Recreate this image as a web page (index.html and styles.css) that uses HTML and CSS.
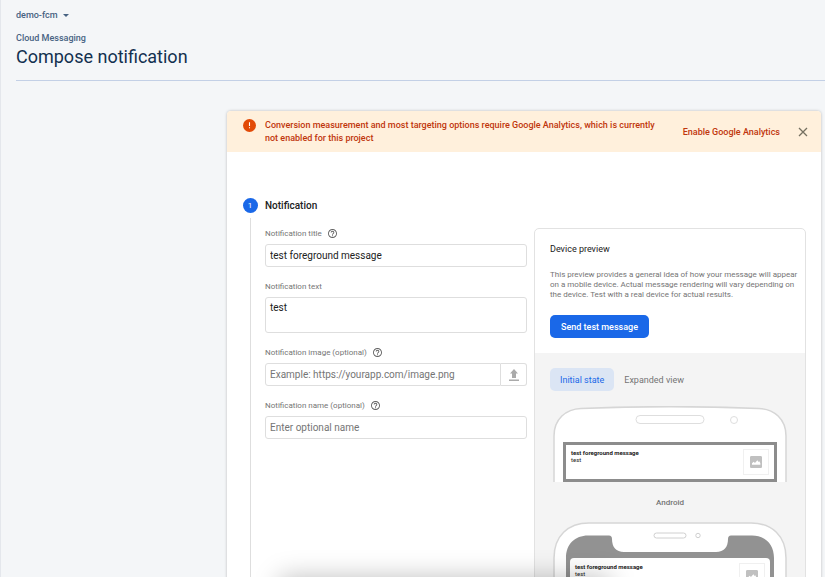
FILE: index.html
```html
<!DOCTYPE html>
<html lang="en">
<head>
    <meta charset="UTF-8">
    <meta name="viewport" content="width=device-width, initial-scale=1.0">
    <title>Compose notification</title>
    <link rel="stylesheet" href="styles.css">
</head>
<body>
    <!-- shared icons -->
    <svg class="sprite" aria-hidden="true">
        <symbol id="icon-help" viewBox="2 2 20 20">
            <path d="M11 18h2v-2h-2v2zm1-16C6.48 2 2 6.48 2 12s4.48 10 10 10 10-4.48 10-10S17.52 2 12 2zm0 18c-4.41 0-8-3.59-8-8s3.59-8 8-8 8 3.59 8 8-3.59 8-8 8zm0-14c-2.21 0-4 1.79-4 4h2c0-1.1.9-2 2-2s2 .9 2 2c0 2-3 1.75-3 5h2c0-2.25 3-2.5 3-5 0-2.21-1.79-4-4-4z"/>
        </symbol>
        <symbol id="icon-image" viewBox="3 3 18 18">
            <path d="M21 19V5c0-1.1-.9-2-2-2H5c-1.1 0-2 .9-2 2v14c0 1.1.9 2 2 2h14c1.1 0 2-.9 2-2zM6 16v-2l2.500-2.500 2 2 3.500-4 2 2.500 1-1 1.500 3V16z" fill-rule="evenodd"/>
        </symbol>
    </svg>

    <header class="page-header">
        <button class="project-picker" type="button">
            demo-fcm
            <svg viewBox="0 0 6 3" width="6" height="3" aria-hidden="true"><path d="M0 0h6L3 3z"/></svg>
        </button>
        <a class="section-link" href="#">Cloud Messaging</a>
        <h1>Compose notification</h1>
    </header>

    <main class="card">
        <div class="banner" role="alert">
            <svg class="banner-icon" viewBox="0 0 24 24" aria-hidden="true">
                <circle cx="12" cy="12" r="12"/>
                <path d="M11 6h2v7h-2zM11 15h2v2h-2z" fill="#fff"/>
            </svg>
            <p>Conversion measurement and most targeting options require Google Analytics, which is currently not enabled for this project</p>
            <a href="#">Enable Google Analytics</a>
            <button class="close" type="button" aria-label="Dismiss">
                <svg viewBox="0 0 10 10" width="10" height="10"><path d="M1 1l8 8M9 1L1 9" fill="none" stroke="#757061" stroke-width="1.300"/></svg>
            </button>
        </div>

        <section class="step">
            <div class="step-rail"><span class="step-number">1</span></div>
            <div class="step-content">
                <h2>Notification</h2>
                <div class="step-columns">
                    <form class="fields">
                        <div class="form-group">
                            <div class="label-row">
                                <label for="title">Notification title</label>
                                <button class="help" type="button" aria-label="Help"><svg><use href="#icon-help"/></svg></button>
                            </div>
                            <input type="text" id="title" value="test foreground message">
                        </div>
                        <div class="form-group">
                            <div class="label-row">
                                <label for="text">Notification text</label>
                            </div>
                            <textarea id="text">test</textarea>
                        </div>
                        <div class="form-group">
                            <div class="label-row">
                                <label for="image">Notification image (optional)</label>
                                <button class="help" type="button" aria-label="Help"><svg><use href="#icon-help"/></svg></button>
                            </div>
                            <div class="upload-row">
                                <input type="text" id="image" placeholder="Example: https://yourapp.com/image.png">
                                <button class="upload" type="button" aria-label="Upload image">
                                    <svg viewBox="0 0 10 12" width="10" height="12"><path d="M5 0l4 4.500H7V9H3V4.500H1zM0 10.500h10V12H0z"/></svg>
                                </button>
                            </div>
                        </div>
                        <div class="form-group">
                            <div class="label-row">
                                <label for="name">Notification name (optional)</label>
                                <button class="help" type="button" aria-label="Help"><svg><use href="#icon-help"/></svg></button>
                            </div>
                            <input type="text" id="name" placeholder="Enter optional name">
                        </div>
                    </form>

                    <aside class="preview">
                        <div class="preview-info">
                            <h3>Device preview</h3>
                            <p>This preview provides a general idea of how your message will appear on a mobile device. Actual message rendering will vary depending on the device. Test with a real device for actual results.</p>
                            <button class="primary" type="button">Send test message</button>
                        </div>
                        <div class="preview-devices">
                            <div class="tabs">
                                <button class="tab active" type="button">Initial state</button>
                                <button class="tab" type="button">Expanded view</button>
                            </div>

                            <div class="phone android">
                                <svg class="phone-frame" viewBox="0 0 234 76" aria-hidden="true">
                                    <path d="M1 77V30C1 13 13 3 28 2.500C88 0 146 0 206 2.500C221 3 233 13 233 30V77" fill="#fff" stroke="#d6d6d6" stroke-width="1.500"/>
                                    <rect x="83" y="9.500" width="68" height="8" rx="4" fill="#fff" stroke="#dedede"/>
                                    <circle cx="181" cy="14" r="3.500" fill="#fff" stroke="#dedede"/>
                                </svg>
                                <div class="message">
                                    <div>
                                        <strong>test foreground message</strong>
                                        <span>test</span>
                                    </div>
                                    <div class="thumb"><svg><use href="#icon-image"/></svg></div>
                                </div>
                            </div>
                            <div class="phone-name">Android</div>

                            <div class="phone ios">
                                <svg class="phone-frame" viewBox="0 0 234 110" aria-hidden="true">
                                    <path d="M1 110V36C1 14 15 1 36 1H198C219 1 233 14 233 36V110" fill="#fff" stroke="#d6d6d6" stroke-width="1.500"/>
                                    <path d="M13 110V36C13 22 22 13.500 35 13.500H56Q59 13.500 59 17C59 25 63 30 71 30H163C171 30 175 25 175 17Q175 13.500 178 13.500H199C212 13.500 221 22 221 36V110z" fill="#929292"/>
                                    <rect x="101" y="11" width="32" height="5" rx="2.500" fill="#fff" stroke="#d0d0d0"/>
                                    <circle cx="145" cy="13.500" r="2.200" fill="#fff" stroke="#d0d0d0"/>
                                </svg>
                                <div class="message">
                                    <div>
                                        <strong>test foreground message</strong>
                                        <span>test</span>
                                    </div>
                                    <div class="thumb"><svg><use href="#icon-image"/></svg></div>
                                </div>
                            </div>
                        </div>
                    </aside>
                </div>
            </div>
        </section>
    </main>

    <!-- floating panel resting under the fold, only its shadow shows -->
    <div class="bottom-sheet"></div>
</body>
</html>
```

FILE: styles.css
```css
* { box-sizing: border-box; }
body { margin: 0; height: 100vh; overflow: hidden; padding-left: 1px; background: #f4f6f8; border-left: 1px solid #e4e7ec; font-family: Roboto, Arial, sans-serif; font-size: 9px; color: #212121; }
h1, h2, h3, p { margin: 0; }
a { text-decoration: none; }
button { border: none; background: none; padding: 0; font-family: inherit; font-size: inherit; cursor: pointer; }
svg { display: block; }
.sprite { position: absolute; width: 0; height: 0; }

/* header */
.page-header { display: flex; flex-direction: column; align-items: flex-start; margin-left: 14px; padding: 8px 0 11px; border-bottom: 1px solid #c3d0e6; color: #476282; }
.project-picker { display: flex; align-items: center; gap: 5px; height: 14px; color: inherit; font-weight: 500; fill: #476282; }
.section-link { margin-top: 9px; line-height: 14px; font-weight: 500; color: inherit; }
h1 { line-height: 24px; font-size: 18px; font-weight: 400; color: #12304f; }

/* card */
.card { margin: 30px 4px 0 225px; min-height: 100vh; background: #fff; border-radius: 4px; box-shadow: 0 0 3px rgba(0, 0, 0, 0.25); }
.banner { display: flex; align-items: center; padding: 8px 13px 7px 16px; background: #fff0dc; border-radius: 4px 4px 0 0; color: #bf360c; font-weight: 500; line-height: 13px; }
.banner p { flex: 1; }
.banner a { margin: 0 18px 0 24px; color: inherit; }
.banner-icon { width: 13px; height: 13px; margin-right: 9px; align-self: flex-start; fill: #e24a07; }

.step { display: flex; gap: 7px; padding: 46px 15px 0 15px; }
.step-rail { display: flex; flex-direction: column; align-items: center; gap: 5px; width: 16px; }
.step-rail::after { content: ""; flex: 1; width: 1px; background: #dedede; }
.step-number { width: 15px; height: 15px; border-radius: 50%; background: #1a68e8; color: #fff; font-size: 8px; line-height: 15px; text-align: center; }
.step-content { flex: 1; }
h2 { font-size: 10px; font-weight: 500; line-height: 16px; }
.step-columns { display: grid; grid-template-columns: 262px 1fr; gap: 7px; align-items: start; padding-top: 14px; }

/* form */
.fields { display: flex; flex-direction: column; gap: 14px; }
.label-row { display: flex; align-items: center; gap: 6px; height: 10px; margin-bottom: 6px; font-size: 8px; color: #757575; }
.help svg { width: 9px; height: 9px; fill: #616161; }
input, textarea { display: block; width: 100%; height: 23px; padding: 0 4px; border: 1px solid #dedede; border-radius: 3px; background: #fff; font-family: inherit; font-size: 10px; color: #212121; }
textarea { height: 36px; padding-top: 4px; resize: none; }
input::placeholder { color: #757575; }
.upload-row { display: flex; }
.upload-row input { border-radius: 3px 0 0 3px; }
.upload { display: flex; align-items: center; justify-content: center; width: 26px; flex-shrink: 0; border: 1px solid #dedede; border-left: none; border-radius: 0 3px 3px 0; fill: #aaa; }

/* preview */
.preview { border: 1px solid #e2e2e2; border-radius: 5px; }
.preview-info { padding: 13px 5px 15px 15px; }
h3 { font-size: 9px; font-weight: 400; line-height: 14px; }
.preview-info p { margin: 14px 0 15px; font-size: 8px; line-height: 10px; color: #757575; }
.primary { height: 23px; padding: 0 11px; border-radius: 5px; background: #1a68e8; color: #fff; font-weight: 500; }
.preview-devices { padding: 15px; background: #f4f4f4; }
.tabs { display: flex; margin-bottom: 15px; }
.tab { height: 23px; padding: 0 10px; border-radius: 5px; color: #757575; }
.tab.active { background: #dbe5f4; color: #1a68e8; }

.phone { position: relative; width: 234px; max-width: 100%; margin: 0 auto; }
.phone-frame { position: absolute; top: 0; left: 0; width: 100%; }
.message { position: relative; display: flex; justify-content: space-between; align-items: flex-start; padding: 5px; background: #fff; font-size: 6px; line-height: 7px; }
.message strong { display: block; font-weight: 700; }
.message span { display: block; }
.thumb { display: flex; align-items: center; justify-content: center; width: 26px; height: 26px; border: 1px solid #f0f0f0; }
.thumb svg { width: 12px; height: 12px; fill: #c0c0c0; }
.android { padding: 36px 10px 0; }
.android .message { height: 40px; padding-top: 4px; border: 3px solid #8c8c8c; }
.ios { height: 110px; padding: 36px 17px 0; }
.ios .message { height: 60px; border-radius: 4px; }
.phone-name { margin: 15px 0 13px; line-height: 12px; text-align: center; font-size: 8px; font-weight: 500; color: #757575; }

.bottom-sheet { position: fixed; top: 100%; left: 280px; width: 330px; height: 100px; box-shadow: 0 0 24px rgba(0, 0, 0, 0.25); }
```
